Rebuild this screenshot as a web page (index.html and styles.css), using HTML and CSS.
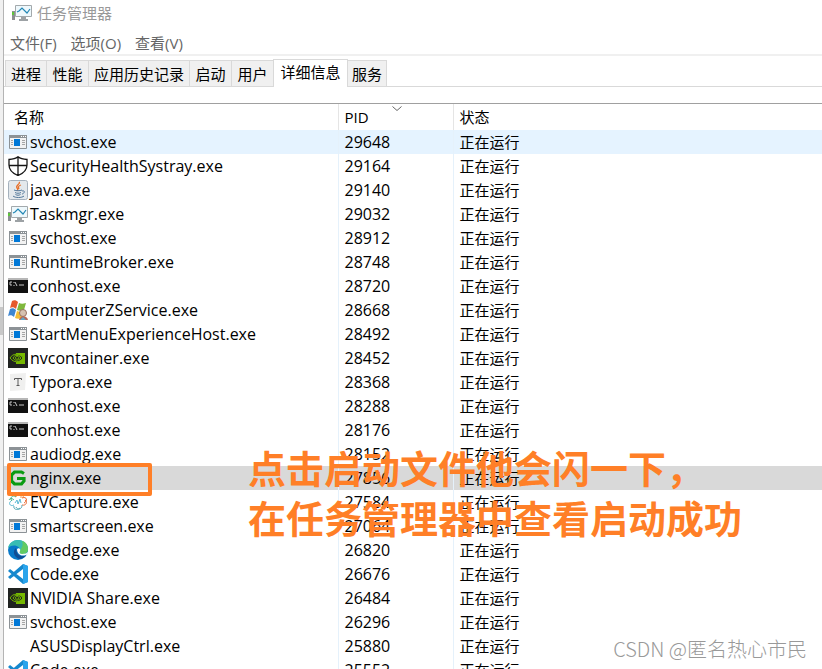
FILE: index.html
```html
<!DOCTYPE html>
<html lang="zh-CN">
<head>
<meta charset="utf-8">
<title>任务管理器</title>
<link rel="stylesheet" href="styles.css">
</head>
<body>
<svg class="sprite" aria-hidden="true">
  <symbol id="monitor" viewBox="0 0 20 20">
    <path d="M0 8h3v9H0z" fill="#8b8f91"/><path d="M0 9h2v3H0z" fill="#5fc43c"/>
    <path d="M3.5 2.5h16v11h-16z" fill="#eef8fc" stroke="#a3a9ac"/>
    <path d="M5 9l2-1 3-3 5 5 3-4" fill="none" stroke="#2387b5" stroke-width="1.2"/>
    <path d="M9 14h5v2h2v2H7v-2h2z" fill="#9da2a5"/>
  </symbol>
  <symbol id="app" viewBox="0 0 20 20">
    <path d="M1.5 3.5h17v13h-17z" fill="#f2f2f2" stroke="#8c9296"/><path d="M1 3h18v3H1z" fill="#8c9296"/>
    <path d="M13 4h1v1h-1zm2 0h1v1h-1zm2 0h1v1h-1z" fill="#fff"/>
    <path d="M6 7h6v7H6z" fill="#0078d7"/>
    <path d="M3 8.500h2M3 10.500h2M3 12.500h2M14 8.500h3M14 10.500h3M14 12.500h3" stroke="#a6a6a6"/>
  </symbol>
  <symbol id="shield" viewBox="0 0 20 20">
    <path d="M10 .8C7.5 2.8 4 3.4 1 3.5V9c0 5 4 8.500 9 10.500 5-2 9-5.500 9-10.500V3.500c-3-.1-6.500-.7-9-2.700zM10 1v18M1 9.500h18" fill="#fff" stroke="#151515" stroke-width="1.300"/>
  </symbol>
  <symbol id="java" viewBox="0 0 20 20">
    <rect x=".5" y=".5" width="19" height="19" rx="2" fill="#e3e8ec" stroke="#a5b1bd"/>
    <path d="M11 2c2 2-4 3-2 6 1 1 1 2 0 2M13 5c-3 1-3 2-2 4" fill="none" stroke="#e8702a" stroke-width="1.300"/>
    <path d="M6 10c2 1 6 1 8 0M7 12.500c2 1 4 1 6 0M7.500 14.500c2 1 3 1 5 0M5 16c2 2 9 2 11 0M14 11c4-1 2 3 0 3" fill="none" stroke="#52779a"/>
  </symbol>
  <symbol id="console" viewBox="0 0 20 20">
    <path d="M0 3h20v14H0z" fill="#111"/><path d="M0 2h20v2H0z" fill="#b7b7b7"/>
    <path d="M4 6H2v3h2M6 6v1M6 9v1M7 6l2 4M11 9h5" fill="none" stroke="#c7c7c7"/>
  </symbol>
  <symbol id="windows" viewBox="0 0 20 20">
    <path d="M4 1c2-1 4-1 6 1L8 9C6 7 4 7 2 8z" fill="#e65a2c"/><path d="M11 3c2 1 4 1 7 0l-2 7c-3 1-5 1-7 0z" fill="#7fb83c"/>
    <path d="M2 9c2-1 4-1 6 1l-2 7c-2-2-4-2-6-1z" fill="#3e86d0"/><path d="M9 11c2 1 4 1 7 0l-2 7c-3 1-5 1-7 0z" fill="#f4be36"/>
    <circle cx="15" cy="13" r="3.500" fill="#d7c2b1" stroke="#987263"/><path d="M11 20c1-5 8-5 9 0z" fill="#b86757"/><path d="M12 20l3-3 3 3z" fill="#65a8c6"/>
  </symbol>
  <symbol id="nvidia" viewBox="0 0 20 20">
    <path d="M0 0h20v20H0z" fill="#202321"/><path d="M8 5h9v11H8z" fill="#76b900"/>
    <path d="M2 10c3-5 9-5 13 0-4 5-9 5-13 0z" fill="#202321" stroke="#76b900"/>
    <path d="M5 10c2-4 6-3 8 0-3 3-6 3-8 0zM7 10c2-3 4-1 4 0-2 2-3 1-4 0z" fill="none" stroke="#76b900"/>
  </symbol>
  <symbol id="typora" viewBox="0 0 20 20">
    <path d="M2 2l16-1-1 17-15 1z" fill="#f0f0ef"/><path d="M6.500 8V6.500h7V8M10 6v8M8.500 13.500h3" fill="none" stroke="#5b5b5b"/>
  </symbol>
  <symbol id="nginx" viewBox="0 0 20 20">
    <path d="M16 5.500L13.500 4h-7L3.500 7v6l3 3h7l2.500-3v-2.500H9" fill="none" stroke="#0a9b13" stroke-width="3.200"/>
  </symbol>
  <symbol id="capture" viewBox="0 0 20 20" fill="none">
    <path d="M4 9C1 6 5 2 8 5M1 8c1-2 3-2 5 0" stroke="#36a77c"/><path d="M8 5c1-5 6-2 5 1M11 2c3-1 5 1 4 4" stroke="#f29642"/>
    <path d="M14 6c5-2 6 3 2 5M17 8c3 2 1 6-3 5" stroke="#ea6c36"/><path d="M14 13c0 5-5 5-6 2M12 16c-3 3-7 1-6-2" stroke="#54a8b6"/>
    <path d="M6 13c-4 2-6-2-3-4M7 11l2-3 1 4 2-5 1 4" stroke="#5cb9d4"/>
  </symbol>
  <symbol id="edge" viewBox="0 0 20 20">
    <circle cx="10" cy="10" r="10" fill="#0878c8"/><path d="M0 8C1 3 5 0 10 0c6 0 10 4 10 9 0 4-3 5-6 5-2 0-3-1-2-3 1-5-7-8-12-3z" fill="#38bdb3"/>
    <path d="M14 1c4 1 6 4 6 8 0 4-3 5-6 5-2 0-3-1-2-3 1-3 4-5 2-10z" fill="#62ca63"/>
    <path d="M8 8c-4 3-2 9 3 11 3 0 6-2 7-4-5 3-10 0-10-7z" fill="#104d94"/><path d="M9 9c2-2 4 0 3 2-1 2 0 3 2 3 3 0 5-1 6-2 0 2-1 3-2 3-6 2-9-2-9-6z" fill="#fff"/>
  </symbol>
  <symbol id="code" viewBox="0 0 20 20">
    <path d="M15 0l5 2v16l-5 2L0 7l2-2 13 10V5L2 15l-2-2z" fill="#1688ce"/><path d="M15 0l5 2v16l-5 2z" fill="#2aa4ec"/>
  </symbol>
</svg>
<div class="screen">
  <aside class="backdrop" aria-hidden="true"></aside>
  <main class="window">
    <header class="titlebar"><svg class="icon"><use href="#monitor"/></svg><h1>任务管理器</h1></header>
    <nav class="menu"><button>文件(F)</button><button>选项(O)</button><button>查看(V)</button></nav>
    <div class="tabs" role="tablist">
      <button role="tab">进程</button><button role="tab">性能</button><button role="tab">应用历史记录</button><button role="tab">启动</button><button role="tab">用户</button><button role="tab" class="active" aria-selected="true">详细信息</button><button role="tab">服务</button>
    </div>
    <section class="details">
      <table>
        <colgroup><col class="name-col"><col class="pid-col"><col></colgroup>
        <thead><tr><th>名称</th><th>PID<svg class="sort" viewBox="0 0 10 5"><path d="M.5.5l4.500 4 4.500-4"/></svg></th><th>状态</th></tr></thead>
        <tbody>
          <tr class="hover"><td><svg class="icon"><use href="#app"/></svg>svchost.exe</td><td>29648</td><td>正在运行</td></tr>
          <tr><td><svg class="icon"><use href="#shield"/></svg>SecurityHealthSystray.exe</td><td>29164</td><td>正在运行</td></tr>
          <tr><td><svg class="icon"><use href="#java"/></svg>java.exe</td><td>29140</td><td>正在运行</td></tr>
          <tr><td><svg class="icon"><use href="#monitor"/></svg>Taskmgr.exe</td><td>29032</td><td>正在运行</td></tr>
          <tr><td><svg class="icon"><use href="#app"/></svg>svchost.exe</td><td>28912</td><td>正在运行</td></tr>
          <tr><td><svg class="icon"><use href="#app"/></svg>RuntimeBroker.exe</td><td>28748</td><td>正在运行</td></tr>
          <tr><td><svg class="icon"><use href="#console"/></svg>conhost.exe</td><td>28720</td><td>正在运行</td></tr>
          <tr><td><svg class="icon"><use href="#windows"/></svg>ComputerZService.exe</td><td>28668</td><td>正在运行</td></tr>
          <tr><td><svg class="icon"><use href="#app"/></svg>StartMenuExperienceHost.exe</td><td>28492</td><td>正在运行</td></tr>
          <tr><td><svg class="icon"><use href="#nvidia"/></svg>nvcontainer.exe</td><td>28452</td><td>正在运行</td></tr>
          <tr><td><svg class="icon"><use href="#typora"/></svg>Typora.exe</td><td>28368</td><td>正在运行</td></tr>
          <tr><td><svg class="icon"><use href="#console"/></svg>conhost.exe</td><td>28288</td><td>正在运行</td></tr>
          <tr><td><svg class="icon"><use href="#console"/></svg>conhost.exe</td><td>28176</td><td>正在运行</td></tr>
          <tr><td><svg class="icon"><use href="#app"/></svg>audiodg.exe</td><td>28152</td><td>正在运行</td></tr>
          <tr class="selected"><td><svg class="icon"><use href="#nginx"/></svg>nginx.exe</td><td>27856</td><td>正在运行</td></tr>
          <tr><td><svg class="icon"><use href="#capture"/></svg>EVCapture.exe</td><td>27584</td><td>正在运行</td></tr>
          <tr><td><svg class="icon"><use href="#app"/></svg>smartscreen.exe</td><td>27064</td><td>正在运行</td></tr>
          <tr><td><svg class="icon"><use href="#edge"/></svg>msedge.exe</td><td>26820</td><td>正在运行</td></tr>
          <tr><td><svg class="icon"><use href="#code"/></svg>Code.exe</td><td>26676</td><td>正在运行</td></tr>
          <tr><td><svg class="icon"><use href="#nvidia"/></svg>NVIDIA Share.exe</td><td>26484</td><td>正在运行</td></tr>
          <tr><td><svg class="icon"><use href="#app"/></svg>svchost.exe</td><td>26296</td><td>正在运行</td></tr>
          <tr><td><svg class="icon"></svg>ASUSDisplayCtrl.exe</td><td>25880</td><td>正在运行</td></tr>
          <tr><td><svg class="icon"><use href="#code"/></svg>Code.exe</td><td>25552</td><td>正在运行</td></tr>
        </tbody>
      </table>
      <div class="marker"></div>
      <p class="note">点击启动文件他会闪一下，<br>在任务管理器中查看启动成功</p>
    </section>
  </main>
  <p class="watermark">CSDN @匿名热心市民</p>
</div>
</body>
</html>
```
FILE: styles.css
```css
* { box-sizing: border-box; }
body { margin: 0; background: #fff; color: #000; font: 15px/24px "Open Sans", "Noto Sans CJK SC", sans-serif; }
button { margin: 0; border: 0; padding: 0; background: none; color: inherit; font: inherit; white-space: nowrap; }
.sprite { position: absolute; width: 0; height: 0; }
.screen { position: relative; display: flex; height: 100vh; overflow: hidden; }
.backdrop { width: 4px; flex: none; background: linear-gradient(#f0f0f0 307px, #c8c8c8 307px 335px, #f0f0f0 335px); border-right: 1px solid #b4b4b4; }
.window { flex: 1; min-width: 0; }
.icon { width: 20px; height: 20px; flex: none; }
.titlebar { display: flex; align-items: center; gap: 5px; height: 26px; padding-left: 8px; color: #999; }
h1 { margin: 0; font-size: 15px; font-weight: 400; }
.menu { display: flex; align-items: center; gap: 14px; height: 30px; padding: 6px 6px 0; border-bottom: 2px solid #f0f0f0; color: #666; }
.tabs { display: flex; align-items: flex-end; height: 31px; padding-left: 1px; border-bottom: 1px solid #d9d9d9; }
.tabs button { height: 26px; min-width: 42px; padding: 0 5px; border: 1px solid #d9d9d9; border-width: 1px 1px 0 0; background: #f0f0f0; }
.tabs button:first-child { border-left-width: 1px; }
.tabs .active { height: 28px; min-width: 75px; margin: 0 0 -1px -1px; padding-bottom: 3px; border-left-width: 1px; background: #fff; }
.tabs button:last-child { min-width: 39px; padding: 0 4px; }
.details { position: relative; margin-top: 16px; border-top: 1px solid #a0a0a0; }
table { width: 100%; table-layout: fixed; border-collapse: collapse; }
.name-col { width: 334px; }
.pid-col { width: 115px; }
tr { height: 24px; }
thead tr { height: 26px; }
th, td { padding: 0 6px; text-align: left; font-weight: 400; white-space: nowrap; border-right: 1px solid #e5f1fb; }
th { position: relative; border-color: #e5e5e5; }
th:first-child { padding-left: 10px; }
th:last-child, td:last-child { border-right: 0; }
td { padding: 2px 6px; font-size: 16px; line-height: 20px; }
td:first-child { padding-left: 4px; }
td:last-child { font-size: 15px; }
td .icon { margin-right: 2px; vertical-align: top; }
.hover { background: #e5f3ff; }
.selected { background: #d9d9d9; }
.sort { position: absolute; left: 53px; top: 2px; width: 10px; height: 5px; fill: none; stroke: #666; }
.marker { position: absolute; left: 3px; top: 359px; width: 145px; height: 33px; border: 4px solid #ff7f27; border-radius: 2px; }
.note { position: absolute; left: 244px; top: 338px; margin: 0; color: #ff7f27; font: 700 38px/50px "Noto Sans CJK SC", sans-serif; white-space: nowrap; }
.watermark { position: absolute; right: 15px; bottom: 8px; margin: 0; color: #999; font: 20px/24px "Noto Sans CJK SC", sans-serif; font-weight: 300; }
```
